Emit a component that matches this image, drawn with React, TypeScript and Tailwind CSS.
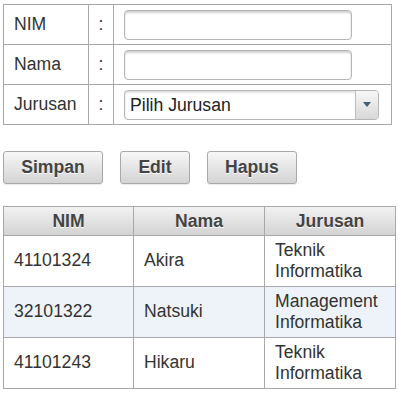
import React from "react";

const font = { fontFamily: '"Liberation Sans", Arial, sans-serif' };

function Btn({ label, w }: { label: string; w: string }) {
  return (
    <button
      className={`${w} h-[33px] rounded-[3px] border border-[#a9a9a9] bg-gradient-to-b from-[#f7f7f7] to-[#d4d4d4] text-[17.6px] font-bold text-[#444] [text-shadow:0_1px_0_#fff] shadow-[0_1px_1px_rgba(0,0,0,0.08)]`}
    >
      {label}
    </button>
  );
}

export default function App() {
  const rows = [
    ["41101324", "Akira", ["Teknik", "Informatika"], false],
    ["32101322", "Natsuki", ["Management", "Informatika"], true],
    ["41101243", "Hikaru", ["Teknik", "Informatika"], false],
  ] as const;

  return (
    <div className="w-[399px] h-[395px] bg-white text-[#333]" style={font}>
      <div className="pt-[4px] pl-[3px]">
        <table className="border-collapse table-fixed w-[389px] text-[17.6px]">
          <colgroup>
            <col className="w-[85px]" />
            <col className="w-[25px]" />
            <col />
          </colgroup>
          <tbody>
            {["NIM", "Nama"].map((l) => (
              <tr key={l} className="h-[40px]">
                <td className="border border-[#a8a8a8] pl-[10px] align-middle">{l}</td>
                <td className="border border-[#a8a8a8] text-center align-middle">:</td>
                <td className="border border-[#a8a8a8] pl-[10px] align-middle">
                  <div className="w-[228px] h-[30px] rounded-[4px] border border-[#b5b5b5] bg-white shadow-[inset_0_2px_2px_rgba(0,0,0,0.18)]" />
                </td>
              </tr>
            ))}
            <tr className="h-[40px]">
              <td className="border border-[#a8a8a8] pl-[10px] align-middle">Jurusan</td>
              <td className="border border-[#a8a8a8] text-center align-middle">:</td>
              <td className="border border-[#a8a8a8] pl-[10px] align-middle">
                <div className="flex w-[255px] h-[30px] rounded-[4px] border border-[#b5b5b5] bg-white shadow-[inset_0_2px_2px_rgba(0,0,0,0.12)] overflow-hidden">
                  <div className="flex-1 pl-[5px] leading-[28px] text-[17.6px] text-[#222]">Pilih Jurusan</div>
                  <div className="w-[23px] h-full border-l border-[#bdbdbd] bg-gradient-to-b from-[#f7f7f7] to-[#d8d8d8] flex items-center justify-center">
                    <svg width="8" height="5" viewBox="0 0 8 5">
                      <path d="M0 0 L8 0 L4 5 Z" fill="#3f5f78" />
                    </svg>
                  </div>
                </div>
              </td>
            </tr>
          </tbody>
        </table>
      </div>

      <div className="flex gap-[17px] pl-[3px] mt-[26px]">
        <Btn label="Simpan" w="w-[100px]" />
        <Btn label="Edit" w="w-[70px]" />
        <Btn label="Hapus" w="w-[90px]" />
      </div>

      <div className="pl-[3px] mt-[22px]">
        <table className="border-collapse table-fixed w-[393px] text-[17.6px]">
          <colgroup>
            <col className="w-[130px]" />
            <col className="w-[131px]" />
            <col />
          </colgroup>
          <thead>
            <tr className="bg-gradient-to-b from-[#f2f2f2] to-[#d2d2d2]">
              {["NIM", "Nama", "Jurusan"].map((h) => (
                <th
                  key={h}
                  className="border border-[#a8a8a8] py-[4px] leading-[20px] font-bold text-[#444] text-center [text-shadow:0_1px_0_#fff]"
                >
                  {h}
                </th>
              ))}
            </tr>
          </thead>
          <tbody>
            {rows.map(([nim, nama, jur, alt]) => (
              <tr key={nim} className={alt ? "bg-[#eef3f9]" : "bg-white"}>
                <td className="border border-[#a8a8a8] pl-[10px] py-[3.5px] leading-[21.5px] align-middle">{nim}</td>
                <td className="border border-[#a8a8a8] pl-[10px] py-[3.5px] leading-[21.5px] align-middle">{nama}</td>
                <td className="border border-[#a8a8a8] pl-[10px] py-[3.5px] leading-[21.5px] align-middle">
                  {jur[0]}
                  <br />
                  {jur[1]}
                </td>
              </tr>
            ))}
          </tbody>
        </table>
      </div>
    </div>
  );
}
